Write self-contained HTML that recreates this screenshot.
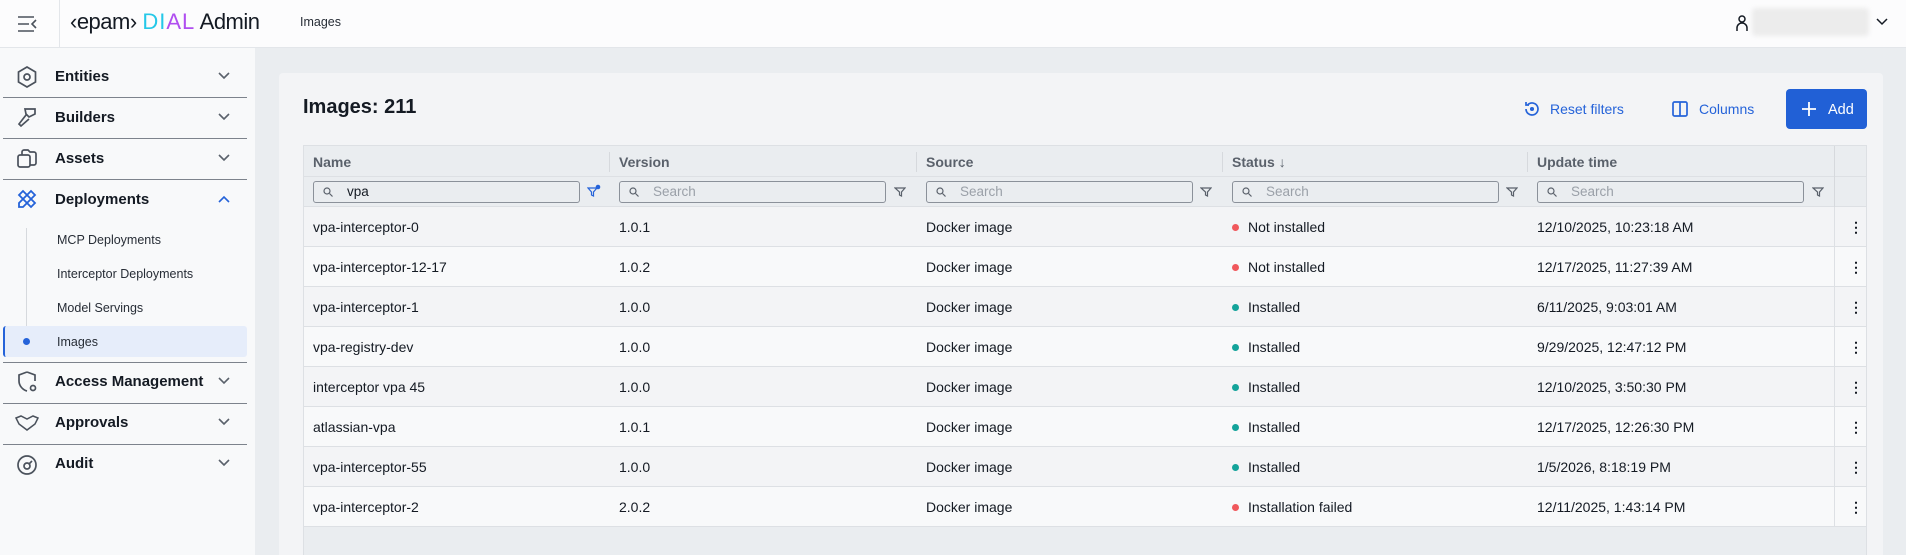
<!DOCTYPE html>
<html><head><style>
*{box-sizing:border-box;margin:0;padding:0}
html,body{width:1906px;height:555px;overflow:hidden}
body{font-family:"Liberation Sans",sans-serif;background:#eaedf0;color:#141a23;position:relative}
.hdr{position:absolute;left:0;top:0;width:1906px;height:48px;background:#fcfcfd;border-bottom:1px solid #e3e6ea}
.side{position:absolute;left:0;top:48px;width:255px;height:507px;background:#f8f9fa}
.abs{position:absolute}
.sec{position:absolute;left:55px;font-size:15px;font-weight:bold;color:#141a23}
.sep{position:absolute;left:3px;width:244px;height:1px;background:#7d838c}
.sub{position:absolute;left:57px;font-size:12.5px;color:#272d36}
.chev{position:absolute;left:217px}
.card{position:absolute;left:279px;top:73px;width:1604px;height:482px;background:#f3f4f6;border-radius:4px 4px 0 0}
.tbl{position:absolute;left:303px;top:145px;width:1564px;height:410px;border:1px solid #dde0e4;border-bottom:none;background:#f8f9fa;overflow:hidden}
.th{position:absolute;top:0;height:31px;background:#eaedf0;border-bottom:1px solid #dde0e4;width:100%}
.fr{position:absolute;top:31px;height:30px;background:#eaedf0;border-bottom:1px solid #dde0e4;width:100%}
.ht{position:absolute;top:8px;font-size:14px;font-weight:bold;color:#5a616b}
.vs{position:absolute;width:1px;background:#d6d9dd}
.inp{position:absolute;top:4px;height:22px;border:1px solid #8b919a;border-radius:3px;font-size:13.5px;color:#9aa0a8;padding-left:33px;line-height:20px}
.row{position:absolute;left:0;width:100%;height:40px;border-bottom:1px solid #dde0e4;background:#f3f4f6;font-size:14px;color:#141a23}
.row span{position:absolute;top:12px}
.dot{position:absolute;top:17px;width:7px;height:7px;border-radius:50%}
</style></head><body>
<div class="hdr">
<svg class="abs" style="left:16px;top:14px" width="22" height="20" viewBox="0 0 22 20" fill="none" stroke="#4b525c" stroke-width="1.6"><path d="M2 3h16M2 10h11M2 17h16M20 6l-4 4 4 4"/></svg>
<div class="abs" style="left:59px;top:0;width:1px;height:48px;background:#e3e6ea"></div>
<div class="abs" style="left:70px;top:9px;font-size:22px;letter-spacing:-0.5px"><span style="color:#141a23">‹epam›</span> <span style="color:#25c8e8;letter-spacing:1px">DI</span><span style="color:#b04ef0;letter-spacing:1px">AL</span> <span style="color:#141a23">Admin</span></div>
<div class="abs" style="left:300px;top:15px;font-size:12.5px;color:#272d36">Images</div>
<svg class="abs" style="left:1735px;top:14px" width="14" height="18" viewBox="0 0 14 18" fill="none" stroke="#141a23" stroke-width="1.5"><circle cx="7" cy="5" r="3"/><path d="M2 17v-3a5 5 0 0 1 10 0v3"/></svg>
<div class="abs" style="left:1752px;top:8px;width:117px;height:28px;background:#ececec;border-radius:4px;filter:blur(2px)"></div>
<svg class="abs" style="left:1876px;top:17px" width="12" height="10" viewBox="0 0 12 10" fill="none" stroke="#141a23" stroke-width="1.5"><path d="M1 2l5 5 5-5"/></svg>
</div>
<div class="side">
<svg class="abs" style="left:16px;top:17px" width="22" height="24" viewBox="0 0 22 24" fill="none" stroke="#4b525c" stroke-width="1.7"><path d="M11 2l8.5 5v10L11 22 2.5 17V7z"/><circle cx="11" cy="12" r="3"/></svg>
<div class="sec" style="top:20px">Entities</div>
<svg class="chev" style="top:23px" width="14" height="10" viewBox="0 0 14 10" fill="none" stroke="#5a616b" stroke-width="1.6"><path d="M2 2l5 5 5-5"/></svg>
<div class="sep" style="top:49px"></div>
<svg class="abs" style="left:16px;top:58px" width="22" height="22" viewBox="0 0 22 22" fill="none" stroke="#4b525c" stroke-width="1.7"><path d="M9 3l10 0 0 5-6 3-3-3zM10 9l-7 9 2 2 8-7"/></svg>
<div class="sec" style="top:61px">Builders</div>
<svg class="chev" style="top:64px" width="14" height="10" viewBox="0 0 14 10" fill="none" stroke="#5a616b" stroke-width="1.6"><path d="M2 2l5 5 5-5"/></svg>
<div class="sep" style="top:90px"></div>
<svg class="abs" style="left:16px;top:100px" width="22" height="22" viewBox="0 0 22 22" fill="none" stroke="#4b525c" stroke-width="1.7"><rect x="2" y="7" width="12" height="12" rx="2"/><path d="M6 7V4a2 2 0 0 1 2-2h4l2 2h4a2 2 0 0 1 2 2v9a2 2 0 0 1-2 2h-4"/></svg>
<div class="sec" style="top:102px">Assets</div>
<svg class="chev" style="top:105px" width="14" height="10" viewBox="0 0 14 10" fill="none" stroke="#5a616b" stroke-width="1.6"><path d="M2 2l5 5 5-5"/></svg>
<div class="sep" style="top:131px"></div>
<svg class="abs" style="left:16px;top:140px" width="22" height="22" viewBox="0 0 22 22" fill="none" stroke="#2563d9" stroke-width="1.8"><path d="M3 7l4-4 12 12-4 4zM3 15l12-12 4 4-12 12-4 0z"/></svg>
<div class="sec" style="top:143px">Deployments</div>
<svg class="chev" style="top:146px" width="14" height="10" viewBox="0 0 14 10" fill="none" stroke="#2563d9" stroke-width="1.6"><path d="M2 8l5-5 5 5"/></svg>
<div class="abs" style="left:26px;top:180px;width:1px;height:98px;background:#d6d9dd"></div>
<div class="sub" style="top:185px">MCP Deployments</div>
<div class="sub" style="top:219px">Interceptor Deployments</div>
<div class="sub" style="top:253px">Model Servings</div>
<div class="abs" style="left:3px;top:278px;width:244px;height:31px;background:#e6edfa;border-left:2px solid #2563d9;border-radius:3px"></div>
<div class="abs" style="left:23px;top:290px;width:7px;height:7px;border-radius:50%;background:#2563d9"></div>
<div class="sub" style="top:287px">Images</div>
<div class="sep" style="top:314px"></div>
<svg class="abs" style="left:16px;top:322px" width="24" height="24" viewBox="0 0 24 24" fill="none" stroke="#4b525c" stroke-width="1.7"><path d="M11 2l8 3v6M11 2L3 5v6c0 5 4 9 8 10"/><circle cx="17" cy="18" r="2.5"/></svg>
<div class="sec" style="top:325px">Access Management</div>
<svg class="chev" style="top:328px" width="14" height="10" viewBox="0 0 14 10" fill="none" stroke="#5a616b" stroke-width="1.6"><path d="M2 2l5 5 5-5"/></svg>
<div class="sep" style="top:355px"></div>
<svg class="abs" style="left:14px;top:366px" width="26" height="18" viewBox="0 0 26 18" fill="none" stroke="#4b525c" stroke-width="1.5"><path d="M2 4l5-2 6 3 6-3 5 2-3 6-8 6-8-6z"/></svg>
<div class="sec" style="top:366px">Approvals</div>
<svg class="chev" style="top:369px" width="14" height="10" viewBox="0 0 14 10" fill="none" stroke="#5a616b" stroke-width="1.6"><path d="M2 2l5 5 5-5"/></svg>
<div class="sep" style="top:396px"></div>
<svg class="abs" style="left:16px;top:406px" width="22" height="22" viewBox="0 0 22 22" fill="none" stroke="#4b525c" stroke-width="1.7"><circle cx="11" cy="11" r="9"/><circle cx="11" cy="12" r="3"/><path d="M13 10l3-3"/></svg>
<div class="sec" style="top:407px">Audit</div>
<svg class="chev" style="top:410px" width="14" height="10" viewBox="0 0 14 10" fill="none" stroke="#5a616b" stroke-width="1.6"><path d="M2 2l5 5 5-5"/></svg>
</div>
<div class="card"></div>
<div class="abs" style="left:303px;top:96px;font-size:20px;font-weight:bold;color:#141a23">Images: 211</div>
<svg class="abs" style="left:1523px;top:100px" width="18" height="18" viewBox="0 0 18 18" fill="none" stroke="#2563d9" stroke-width="1.7"><path d="M3 9a6 6 0 1 0 2-4.5M3 2v3h3"/><circle cx="9" cy="9" r="1.2" fill="#2563d9"/></svg>
<div class="abs" style="left:1550px;top:101px;font-size:14px;color:#2563d9">Reset filters</div>
<svg class="abs" style="left:1671px;top:100px" width="18" height="18" viewBox="0 0 18 18" fill="none" stroke="#2563d9" stroke-width="1.7"><rect x="2" y="2" width="14" height="14" rx="1.5"/><path d="M9 2v14"/></svg>
<div class="abs" style="left:1699px;top:101px;font-size:14px;color:#2563d9">Columns</div>
<div class="abs" style="left:1786px;top:89px;width:81px;height:40px;background:#2160d6;border-radius:4px"></div>
<svg class="abs" style="left:1801px;top:101px" width="16" height="16" viewBox="0 0 16 16" stroke="#fff" stroke-width="1.8"><path d="M8 1v14M1 8h14"/></svg>
<div class="abs" style="left:1828px;top:102px;font-size:14.5px;color:#fff">Add</div>
<div class="tbl">
<div class="th"></div><div class="fr"></div>
<div class="ht" style="left:9px">Name</div>
<div class="ht" style="left:315px">Version</div>
<div class="ht" style="left:622px">Source</div>
<div class="ht" style="left:928px">Status <span style="font-weight:normal">↓</span></div>
<div class="ht" style="left:1233px">Update time</div>
<div class="vs" style="left:305px;top:6px;height:20px"></div><div class="vs" style="left:612px;top:6px;height:20px"></div><div class="vs" style="left:918px;top:6px;height:20px"></div><div class="vs" style="left:1223px;top:6px;height:20px"></div><div class="vs" style="left:1530px;top:0;height:61px"></div>
<div style="position:absolute;top:31px;left:0;width:100%;height:30px">
<div class="inp" style="left:9px;width:267px;color:#141a23">vpa</div>
<div class="inp" style="left:315px;width:267px">Search</div>
<div class="inp" style="left:622px;width:267px">Search</div>
<div class="inp" style="left:928px;width:267px">Search</div>
<div class="inp" style="left:1233px;width:267px">Search</div>
<svg style="position:absolute;left:19px;top:10px" width="10" height="10"><circle cx="4" cy="4" r="3" fill="none" stroke="#5a616b" stroke-width="1.2"/><path d="M6.5 6.5l3 3" stroke="#5a616b" stroke-width="1.2"/></svg>
<svg style="position:absolute;left:325px;top:10px" width="10" height="10"><circle cx="4" cy="4" r="3" fill="none" stroke="#5a616b" stroke-width="1.2"/><path d="M6.5 6.5l3 3" stroke="#5a616b" stroke-width="1.2"/></svg>
<svg style="position:absolute;left:632px;top:10px" width="10" height="10"><circle cx="4" cy="4" r="3" fill="none" stroke="#5a616b" stroke-width="1.2"/><path d="M6.5 6.5l3 3" stroke="#5a616b" stroke-width="1.2"/></svg>
<svg style="position:absolute;left:938px;top:10px" width="10" height="10"><circle cx="4" cy="4" r="3" fill="none" stroke="#5a616b" stroke-width="1.2"/><path d="M6.5 6.5l3 3" stroke="#5a616b" stroke-width="1.2"/></svg>
<svg style="position:absolute;left:1243px;top:10px" width="10" height="10"><circle cx="4" cy="4" r="3" fill="none" stroke="#5a616b" stroke-width="1.2"/><path d="M6.5 6.5l3 3" stroke="#5a616b" stroke-width="1.2"/></svg>
<svg style="position:absolute;left:283px;top:7px" width="14" height="14"><path d="M1 4h9l-3.5 4v4l-2-1V8z" fill="none" stroke="#2563d9" stroke-width="1.2"/><circle cx="11" cy="3" r="2.3" fill="#2563d9"/></svg>
<svg style="position:absolute;left:590px;top:9px" width="12" height="12"><path d="M1 2h10L7.5 6v4l-2-1V6z" fill="none" stroke="#5a616b" stroke-width="1.2"/></svg>
<svg style="position:absolute;left:896px;top:9px" width="12" height="12"><path d="M1 2h10L7.5 6v4l-2-1V6z" fill="none" stroke="#5a616b" stroke-width="1.2"/></svg>
<svg style="position:absolute;left:1202px;top:9px" width="12" height="12"><path d="M1 2h10L7.5 6v4l-2-1V6z" fill="none" stroke="#5a616b" stroke-width="1.2"/></svg>
<svg style="position:absolute;left:1508px;top:9px" width="12" height="12"><path d="M1 2h10L7.5 6v4l-2-1V6z" fill="none" stroke="#5a616b" stroke-width="1.2"/></svg>
</div>
<div class="row" style="top:61px"><span style="left:9px">vpa-interceptor-0</span><span style="left:315px">1.0.1</span><span style="left:622px">Docker image</span><i class="dot" style="left:928px;background:#f0585c"></i><span style="left:944px">Not installed</span><span style="left:1233px">12/10/2025, 10:23:18 AM</span><span style="left:1545px;font-weight:bold">⋮</span></div>
<div class="row" style="top:101px;background:#f8f9fa"><span style="left:9px">vpa-interceptor-12-17</span><span style="left:315px">1.0.2</span><span style="left:622px">Docker image</span><i class="dot" style="left:928px;background:#f0585c"></i><span style="left:944px">Not installed</span><span style="left:1233px">12/17/2025, 11:27:39 AM</span><span style="left:1545px;font-weight:bold">⋮</span></div>
<div class="row" style="top:141px"><span style="left:9px">vpa-interceptor-1</span><span style="left:315px">1.0.0</span><span style="left:622px">Docker image</span><i class="dot" style="left:928px;background:#13a39a"></i><span style="left:944px">Installed</span><span style="left:1233px">6/11/2025, 9:03:01 AM</span><span style="left:1545px;font-weight:bold">⋮</span></div>
<div class="row" style="top:181px;background:#f8f9fa"><span style="left:9px">vpa-registry-dev</span><span style="left:315px">1.0.0</span><span style="left:622px">Docker image</span><i class="dot" style="left:928px;background:#13a39a"></i><span style="left:944px">Installed</span><span style="left:1233px">9/29/2025, 12:47:12 PM</span><span style="left:1545px;font-weight:bold">⋮</span></div>
<div class="row" style="top:221px"><span style="left:9px">interceptor vpa 45</span><span style="left:315px">1.0.0</span><span style="left:622px">Docker image</span><i class="dot" style="left:928px;background:#13a39a"></i><span style="left:944px">Installed</span><span style="left:1233px">12/10/2025, 3:50:30 PM</span><span style="left:1545px;font-weight:bold">⋮</span></div>
<div class="row" style="top:261px;background:#f8f9fa"><span style="left:9px">atlassian-vpa</span><span style="left:315px">1.0.1</span><span style="left:622px">Docker image</span><i class="dot" style="left:928px;background:#13a39a"></i><span style="left:944px">Installed</span><span style="left:1233px">12/17/2025, 12:26:30 PM</span><span style="left:1545px;font-weight:bold">⋮</span></div>
<div class="row" style="top:301px"><span style="left:9px">vpa-interceptor-55</span><span style="left:315px">1.0.0</span><span style="left:622px">Docker image</span><i class="dot" style="left:928px;background:#13a39a"></i><span style="left:944px">Installed</span><span style="left:1233px">1/5/2026, 8:18:19 PM</span><span style="left:1545px;font-weight:bold">⋮</span></div>
<div class="row" style="top:341px;background:#f8f9fa"><span style="left:9px">vpa-interceptor-2</span><span style="left:315px">2.0.2</span><span style="left:622px">Docker image</span><i class="dot" style="left:928px;background:#f0585c"></i><span style="left:944px">Installation failed</span><span style="left:1233px">12/11/2025, 1:43:14 PM</span><span style="left:1545px;font-weight:bold">⋮</span></div>
<div class="vs" style="left:1530px;top:61px;height:320px;background:#dde0e4"></div>
<div style="position:absolute;top:381px;left:0;width:100%;height:40px;background:#eaedf0"></div>
</div>
</body></html>
